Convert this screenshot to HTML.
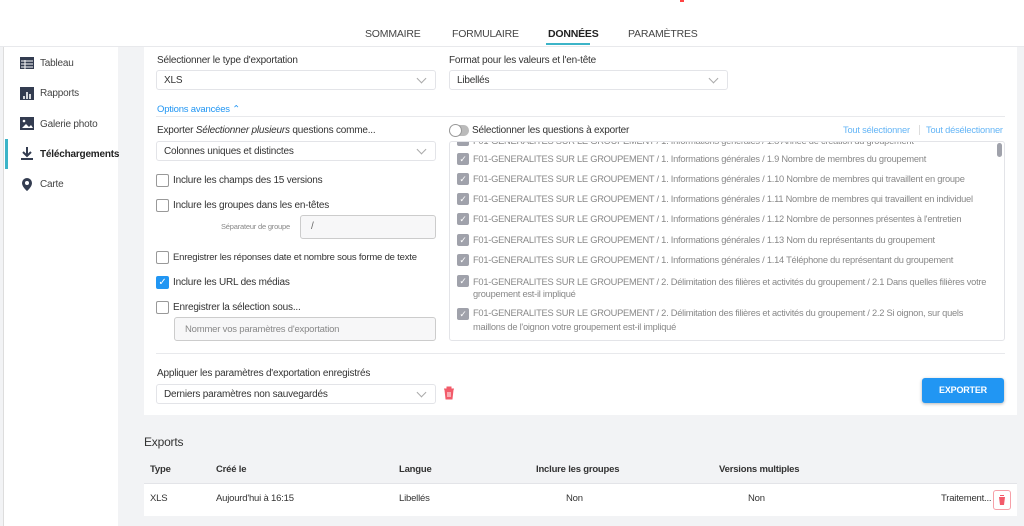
<!DOCTYPE html>
<html><head><meta charset="utf-8"><style>
*{box-sizing:border-box;margin:0;padding:0}
body{width:1024px;height:526px;overflow:hidden;background:#f2f3f5;font-family:"Liberation Sans",sans-serif;font-size:11px;color:#333;position:relative;letter-spacing:-0.2px}
.a{position:absolute}
.top{left:0;top:0;width:1024px;height:47px;background:#fff;border-bottom:1px solid #e8e9ec}
.tab{top:28px;font-size:10.5px;color:#444}
.side{left:3px;top:47px;width:115px;height:479px;background:#fff;border-left:1px solid #ddd}
.si{left:40px;font-size:10px;color:#444}
.card{left:144px;top:47px;width:873px;height:368px;background:#fff}
.lbl{font-size:10px;color:#333}
.sel{height:20px;border:1px solid #e3e4e8;border-radius:3px;background:#fff;font-size:10px;color:#333;padding:4px 7px}
.sel:after{content:"";position:absolute;right:10px;top:4px;width:6px;height:6px;border-right:1px solid #aaa;border-bottom:1px solid #aaa;transform:rotate(45deg)}
.cb{width:13px;height:13px;border:1px solid #999;border-radius:2px;background:#fff}
.q{left:473px;font-size:9.3px;color:#888;white-space:nowrap;letter-spacing:-0.25px}
.qc{left:457px;width:12px;height:12px;background:#a0a2ab;border-radius:2px;color:#fff;font-size:9px;line-height:12px;text-align:center}
.th{top:464px;font-weight:bold;font-size:9.5px;color:#333}
.td{top:493px;font-size:9.5px;color:#333}
</style></head><body>
<div class="a top"></div>
<div class="a tab" style="left:365px">SOMMAIRE</div>
<div class="a tab" style="left:452px">FORMULAIRE</div>
<div class="a tab" style="left:548px;font-weight:bold;color:#222">DONNÉES</div>
<div class="a" style="left:546px;top:43px;width:44px;height:2px;background:#3cb4c8"></div>
<div class="a tab" style="left:628px">PARAMÈTRES</div>
<div class="a" style="left:680px;top:0;width:4px;height:2px;background:#f44"></div>

<div class="a side"></div>
<div class="a" style="left:5px;top:139px;width:3px;height:30px;background:#3cb4c8"></div>
<svg class="a" style="left:20px;top:57px" width="14" height="12"><rect width="14" height="12" fill="#333c50"/><path d="M1 4h12M1 7h12M1 10h12M5 3v9" stroke="#fff" stroke-width="1"/></svg>
<div class="a si" style="top:58px">Tableau</div>
<svg class="a" style="left:20px;top:87px" width="14" height="13"><rect width="14" height="13" fill="#333c50"/><path d="M4 12V9M7 12V5M10 12V7" stroke="#fff" stroke-width="1.6"/></svg>
<div class="a si" style="top:88px">Rapports</div>
<svg class="a" style="left:20px;top:117px" width="14" height="13"><rect width="14" height="13" fill="#333c50"/><path d="M2 11l4-4 3 3 2-2 2 3z" fill="#fff"/><circle cx="4" cy="4" r="1.3" fill="#fff"/></svg>
<div class="a si" style="top:119px">Galerie photo</div>
<svg class="a" style="left:20px;top:146px" width="14" height="14"><path d="M7 1v8M3 6l4 4 4-4M1 13h12" stroke="#333c50" stroke-width="2" fill="none"/></svg>
<div class="a si" style="top:149px;font-weight:bold;color:#222">Téléchargements</div>
<svg class="a" style="left:21px;top:177px" width="12" height="15"><path d="M6 1a5 5 0 0 1 5 5c0 4-5 8-5 8S1 10 1 6a5 5 0 0 1 5-5z" fill="#333c50"/><circle cx="6" cy="6" r="2" fill="#fff"/></svg>
<div class="a si" style="top:179px">Carte</div>

<div class="a card"></div>
<div class="a lbl" style="left:157px;top:55px">Sélectionner le type d'exportation</div>
<div class="a sel" style="left:156px;top:70px;width:280px">XLS</div>
<div class="a lbl" style="left:449px;top:55px">Format pour les valeurs et l'en-tête</div>
<div class="a sel" style="left:449px;top:70px;width:279px">Libellés</div>
<div class="a" style="left:157px;top:104px;font-size:9.5px;color:#2196f3">Options avancées ⌃</div>
<div class="a" style="left:156px;top:116px;width:849px;height:1px;background:#e8e9ec"></div>
<div class="a lbl" style="left:157px;top:125px">Exporter <i>Sélectionner plusieurs</i> questions comme...</div>
<div class="a sel" style="left:156px;top:141px;width:280px">Colonnes uniques et distinctes</div>
<div class="a cb" style="left:156px;top:174px"></div><div class="a lbl" style="left:173px;top:175px">Inclure les champs des 15 versions</div>
<div class="a cb" style="left:156px;top:199px"></div><div class="a lbl" style="left:173px;top:200px">Inclure les groupes dans les en-têtes</div>
<div class="a" style="left:221px;top:222px;font-size:7.5px;color:#888">Séparateur de groupe</div>
<div class="a" style="left:300px;top:215px;width:136px;height:24px;border:1px solid #ccc;border-radius:3px;background:#f7f7f8;padding:5px 10px;font-size:10px;color:#666">/</div>
<div class="a cb" style="left:156px;top:251px"></div><div class="a lbl" style="left:173px;top:252px;font-size:9.5px">Enregistrer les réponses date et nombre sous forme de texte</div>
<div class="a cb" style="left:156px;top:276px;background:#2196f3;border-color:#2196f3;color:#fff;font-size:10px;line-height:11px;text-align:center">✓</div><div class="a lbl" style="left:173px;top:277px">Inclure les URL des médias</div>
<div class="a cb" style="left:156px;top:301px"></div><div class="a lbl" style="left:173px;top:302px">Enregistrer la sélection sous...</div>
<div class="a" style="left:174px;top:317px;width:262px;height:24px;border:1px solid #ccc;border-radius:3px;background:#f7f7f8;padding:6px 10px;font-size:9.5px;color:#888">Nommer vos paramètres d'exportation</div>

<div class="a" style="left:449px;top:125px;width:20px;height:11px;border-radius:6px;background:#bbb"></div>
<div class="a" style="left:449px;top:124px;width:13px;height:13px;border-radius:50%;background:#fff;border:1px solid #999"></div>
<div class="a lbl" style="left:472px;top:125px">Sélectionner les questions à exporter</div>
<div class="a" style="left:843px;top:125px;font-size:9.3px;color:#64b5f6">Tout sélectionner</div>
<div class="a" style="left:919px;top:125px;width:1px;height:10px;background:#ddd"></div>
<div class="a" style="left:926px;top:125px;font-size:9.3px;color:#64b5f6">Tout désélectionner</div>
<div class="a" style="left:449px;top:141px;width:556px;height:200px;border:1px solid #e3e4e8;border-radius:3px;overflow:hidden">
<div class="a" style="left:7px;top:-8px;width:12px;height:12px;background:#a0a2ab;border-radius:2px"></div>
<div class="a" style="left:23px;top:-6px;font-size:9.3px;color:#888;white-space:nowrap;letter-spacing:-0.25px">F01-GENERALITES SUR LE GROUPEMENT / 1. Informations générales / 1.8 Année de création du groupement</div>
</div>
<div class="a" style="left:997px;top:143px;width:5px;height:14px;border-radius:3px;background:#a0a2ab"></div>
<div class="a qc" style="top:153px">✓</div><div class="a q" style="top:154px">F01-GENERALITES SUR LE GROUPEMENT / 1. Informations générales / 1.9 Nombre de membres du groupement</div>
<div class="a qc" style="top:173px">✓</div><div class="a q" style="top:174px">F01-GENERALITES SUR LE GROUPEMENT / 1. Informations générales / 1.10 Nombre de membres qui travaillent en groupe</div>
<div class="a qc" style="top:193px">✓</div><div class="a q" style="top:194px">F01-GENERALITES SUR LE GROUPEMENT / 1. Informations générales / 1.11 Nombre de membres qui travaillent en individuel</div>
<div class="a qc" style="top:213px">✓</div><div class="a q" style="top:214px">F01-GENERALITES SUR LE GROUPEMENT / 1. Informations générales / 1.12 Nombre de personnes présentes à l'entretien</div>
<div class="a qc" style="top:234px">✓</div><div class="a q" style="top:235px">F01-GENERALITES SUR LE GROUPEMENT / 1. Informations générales / 1.13 Nom du représentants du groupement</div>
<div class="a qc" style="top:254px">✓</div><div class="a q" style="top:255px">F01-GENERALITES SUR LE GROUPEMENT / 1. Informations générales / 1.14 Téléphone du représentant du groupement</div>
<div class="a qc" style="top:275px">✓</div><div class="a q" style="top:275px;line-height:14px">F01-GENERALITES SUR LE GROUPEMENT / 2. Délimitation des filières et activités du groupement / 2.1 Dans quelles filières votre</div>
<div class="a q" style="top:289px">groupement est-il impliqué</div>
<div class="a qc" style="top:308px">✓</div><div class="a q" style="top:308px">F01-GENERALITES SUR LE GROUPEMENT / 2. Délimitation des filières et activités du groupement / 2.2 Si oignon, sur quels</div>
<div class="a q" style="top:322px">maillons de l'oignon votre groupement est-il impliqué</div>

<div class="a" style="left:156px;top:353px;width:849px;height:1px;background:#e8e9ec"></div>
<div class="a lbl" style="left:157px;top:368px">Appliquer les paramètres d'exportation enregistrés</div>
<div class="a sel" style="left:156px;top:384px;width:280px">Derniers paramètres non sauvegardés</div>
<svg class="a" style="left:443px;top:386px" width="12" height="14"><path d="M1 3h10M4 3V1h4v2M2 4h8l-1 9H3z" fill="#f25b6a" stroke="#f25b6a"/><path d="M5 6v5M7 6v5" stroke="#fff"/></svg>
<div class="a" style="left:922px;top:378px;width:82px;height:25px;background:#2196f3;border-radius:3px;color:#fff;font-weight:bold;font-size:9px;text-align:center;line-height:25px;box-shadow:0 1px 3px rgba(0,0,0,.3)">EXPORTER</div>

<div class="a" style="left:144px;top:435px;font-size:12px;color:#333">Exports</div>
<div class="a th" style="left:150px">Type</div>
<div class="a th" style="left:216px">Créé le</div>
<div class="a th" style="left:399px">Langue</div>
<div class="a th" style="left:536px">Inclure les groupes</div>
<div class="a th" style="left:719px">Versions multiples</div>
<div class="a" style="left:144px;top:483px;width:873px;height:33px;background:#fff;border-top:1px solid #e3e4e8"></div>
<div class="a td" style="left:150px">XLS</div>
<div class="a td" style="left:216px">Aujourd'hui à 16:15</div>
<div class="a td" style="left:399px">Libellés</div>
<div class="a td" style="left:566px">Non</div>
<div class="a td" style="left:748px">Non</div>
<div class="a td" style="left:941px">Traitement...</div>
<div class="a" style="left:993px;top:490px;width:18px;height:20px;border:1px solid #f6a0a8;border-radius:3px;background:#fff"></div>
<svg class="a" style="left:997px;top:494px" width="10" height="12"><path d="M1 2h8M3 2V1h4v1M2 3h6l-1 8H3z" fill="#f25b6a"/></svg>
</body></html>
